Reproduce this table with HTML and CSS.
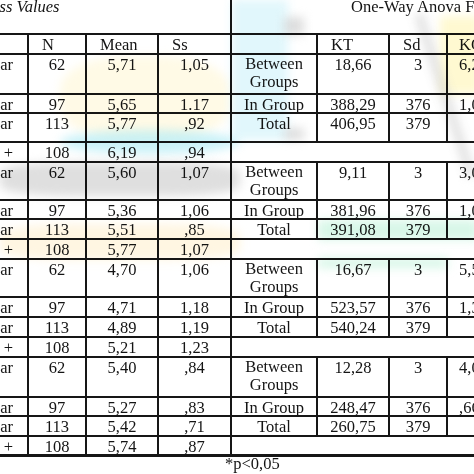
FILE: index.html
```html
<!DOCTYPE html>
<html lang="en">
<head>
<meta charset="utf-8">
<title>One-Way Anova</title>
<link rel="stylesheet" href="styles.css">
</head>
<body>
<div class="watermark" aria-hidden="true">
  <span class="blob b-yel1"></span>
  <span class="blob b-cyan1"></span>
  <span class="blob b-gray1"></span>
  <span class="blob b-yel2"></span>
  <span class="blob b-cyan2"></span>
  <span class="blob b-gray2"></span>
  <span class="blob b-gray3"></span>
  <span class="blob b-yel3"></span>
  <span class="blob b-diag"></span>
  <span class="blob b-green1"></span>
  <span class="blob b-green2"></span>
</div>
<div class="page">
<table class="t">
  <colgroup>
    <col class="c-lab"><col class="c-n"><col class="c-mean"><col class="c-ss">
    <col class="c-src"><col class="c-kt"><col class="c-sd"><col class="c-ko">
  </colgroup>
  <tr class="r-title">
    <td colspan="4" class="title-l">Success Values</td>
    <td colspan="4" class="title-r">One-Way Anova F Test</td>
  </tr>
  <tr class="r20 head">
    <td></td><td>N</td><td>Mean</td><td>Ss</td><td></td><td>KT</td><td>Sd</td><td class="ko-h">KO</td>
  </tr>

  <tr class="r40">
    <td class="lab">1-5 yıllar</td><td>62</td><td>5,71</td><td>1,05</td>
    <td class="src2">Between<br>Groups</td><td>18,66</td><td>3</td><td class="ko">6,22</td>
  </tr>
  <tr class="r19">
    <td class="lab">6-10 yıllar</td><td>97</td><td>5,65</td><td>1.17</td>
    <td>In Group</td><td>388,29</td><td>376</td><td class="ko">1,03</td>
  </tr>
  <tr class="r29">
    <td class="lab">11-15 yıllar</td><td>113</td><td>5,77</td><td>,92</td>
    <td>Total</td><td>406,95</td><td>379</td><td class="ko"></td>
  </tr>
  <tr class="r20">
    <td class="lab">16 +</td><td>108</td><td>6,19</td><td>,94</td>
    <td colspan="4" class="gap"></td>
  </tr>

  <tr class="r38">
    <td class="lab">1-5 yıllar</td><td>62</td><td>5,60</td><td>1,07</td>
    <td class="src2">Between<br>Groups</td><td>9,11</td><td>3</td><td class="ko">3,04</td>
  </tr>
  <tr class="r19">
    <td class="lab">6-10 yıllar</td><td>97</td><td>5,36</td><td>1,06</td>
    <td>In Group</td><td>381,96</td><td>376</td><td class="ko">1,02</td>
  </tr>
  <tr class="r20">
    <td class="lab">11-15 yıllar</td><td>113</td><td>5,51</td><td>,85</td>
    <td>Total</td><td>391,08</td><td>379</td><td class="ko"></td>
  </tr>
  <tr class="r20">
    <td class="lab">16 +</td><td>108</td><td>5,77</td><td>1,07</td>
    <td colspan="4" class="gap"></td>
  </tr>

  <tr class="r38">
    <td class="lab">1-5 yıllar</td><td>62</td><td>4,70</td><td>1,06</td>
    <td class="src2">Between<br>Groups</td><td>16,67</td><td>3</td><td class="ko">5,56</td>
  </tr>
  <tr class="r20">
    <td class="lab">6-10 yıllar</td><td>97</td><td>4,71</td><td>1,18</td>
    <td>In Group</td><td>523,57</td><td>376</td><td class="ko">1,39</td>
  </tr>
  <tr class="r20">
    <td class="lab">11-15 yıllar</td><td>113</td><td>4,89</td><td>1,19</td>
    <td>Total</td><td>540,24</td><td>379</td><td class="ko"></td>
  </tr>
  <tr class="r20">
    <td class="lab">16 +</td><td>108</td><td>5,21</td><td>1,23</td>
    <td colspan="4" class="gap"></td>
  </tr>

  <tr class="r40">
    <td class="lab">1-5 yıllar</td><td>62</td><td>5,40</td><td>,84</td>
    <td class="src2">Between<br>Groups</td><td>12,28</td><td>3</td><td class="ko">4,09</td>
  </tr>
  <tr class="r19">
    <td class="lab">6-10 yıllar</td><td>97</td><td>5,27</td><td>,83</td>
    <td>In Group</td><td>248,47</td><td>376</td><td class="ko">,66</td>
  </tr>
  <tr class="r20">
    <td class="lab">11-15 yıllar</td><td>113</td><td>5,42</td><td>,71</td>
    <td>Total</td><td>260,75</td><td>379</td><td class="ko"></td>
  </tr>
  <tr class="r19">
    <td class="lab">16 +</td><td>108</td><td>5,74</td><td>,87</td>
    <td colspan="4" class="gap"></td>
  </tr>
  <tr class="r-foot">
    <td colspan="8" class="foot">*p&lt;0,05</td>
  </tr>
</table>
</div>
</body>
</html>
```

FILE: styles.css
```css
html, body {
  margin: 0;
  padding: 0;
  background: #ffffff;
}
body {
  width: 474px;
  height: 474px;
  overflow: hidden;
  position: relative;
  font-family: "Liberation Serif", "Times New Roman", serif;
  color: #141414;
}

.page {
  margin-left: -103px;
  position: relative;
  z-index: 1;
}

.t {
  border-collapse: collapse;
  table-layout: fixed;
  width: 607px;
  font-size: 16.5px;
  line-height: 15px;
}
.c-lab { width: 130px; }
.c-n { width: 58px; }
.c-mean { width: 72px; }
.c-ss { width: 73px; }
.c-src { width: 86px; }
.c-kt { width: 72px; }
.c-sd { width: 58px; }
.c-ko { width: 58px; }

.t td {
  border: 2px solid #161616;
  padding: 2px 1px 0;
  text-align: center;
  vertical-align: top;
  white-space: nowrap;
  overflow: hidden;
}

.t .head td {
  text-align: left;
  padding-left: 13px;
}
.t .head td.ko-h {
  padding-left: 11px;
}
.t td.ko {
  text-align: left;
  padding-left: 11px;
}

.t td.lab {
  text-align: right;
  padding-right: 14px;
}
.t td.src2 {
  line-height: 18px;
  padding-top: 0;
}

.r-title { height: 34px; }
.r20 { height: 20px; }
.r19 { height: 19px; }
.r29 { height: 29px; }
.r38 { height: 38px; }
.r40 { height: 40px; }
.r-foot { height: 22px; }

.t .r-title td {
  border-top: none;
  line-height: 14px;
  padding-top: 0;
}
.t td.title-l {
  text-align: left;
  font-style: italic;
  border-left: none;
  padding-left: 63px;
}
.t td.title-r {
  text-align: left;
  padding-left: 119px;
  border-right: none;
}

.t td.gap {
  border-left: none;
  border-right: none;
}

.t td.foot {
  border-left: none;
  border-right: none;
  border-bottom: none;
  border-top: 3px solid #161616;
  text-align: left;
  line-height: 13px;
  padding-left: 327px;
  padding-top: 0;
}

/* faint background watermark */
.watermark {
  position: absolute;
  inset: 0;
  z-index: 2;
  pointer-events: none;
  mix-blend-mode: multiply;
}
.blob {
  position: absolute;
  display: block;
  filter: blur(5px);
}
.b-yel1 { left: 60px; top: 56px; width: 170px; height: 84px; background: rgba(255, 246, 205, 0.5); border-radius: 40%; }
.b-cyan1 { left: 60px; top: 130px; width: 180px; height: 24px; background: rgba(175, 235, 245, 0.65); border-radius: 50%; }
.b-gray1 { left: 0px; top: 162px; width: 240px; height: 34px; background: rgba(215, 215, 215, 0.8); border-radius: 30%; }
.b-yel2 { left: 0px; top: 224px; width: 240px; height: 36px; background: rgba(255, 236, 190, 0.45); border-radius: 30%; }
.b-cyan2 { left: 232px; top: 0px; width: 56px; height: 140px; background: rgba(200, 240, 250, 0.55); }
.b-gray2 { left: 284px; top: 17px; width: 20px; height: 18px; background: rgba(200, 200, 200, 0.6); }
.b-gray3 { left: 284px; top: 128px; width: 20px; height: 12px; background: rgba(200, 200, 200, 0.6); }
.b-yel3 { left: 440px; top: 16px; width: 40px; height: 78px; background: rgba(255, 246, 185, 0.65); }
.b-diag { left: 440px; top: 10px; width: 10px; height: 170px; background: rgba(205, 205, 205, 0.55); transform: rotate(-18deg); }
.b-green1 { left: 318px; top: 220px; width: 160px; height: 20px; background: rgba(195, 242, 220, 0.65); }
.b-green2 { left: 318px; top: 258px; width: 130px; height: 10px; background: rgba(195, 242, 220, 0.65); }
```
